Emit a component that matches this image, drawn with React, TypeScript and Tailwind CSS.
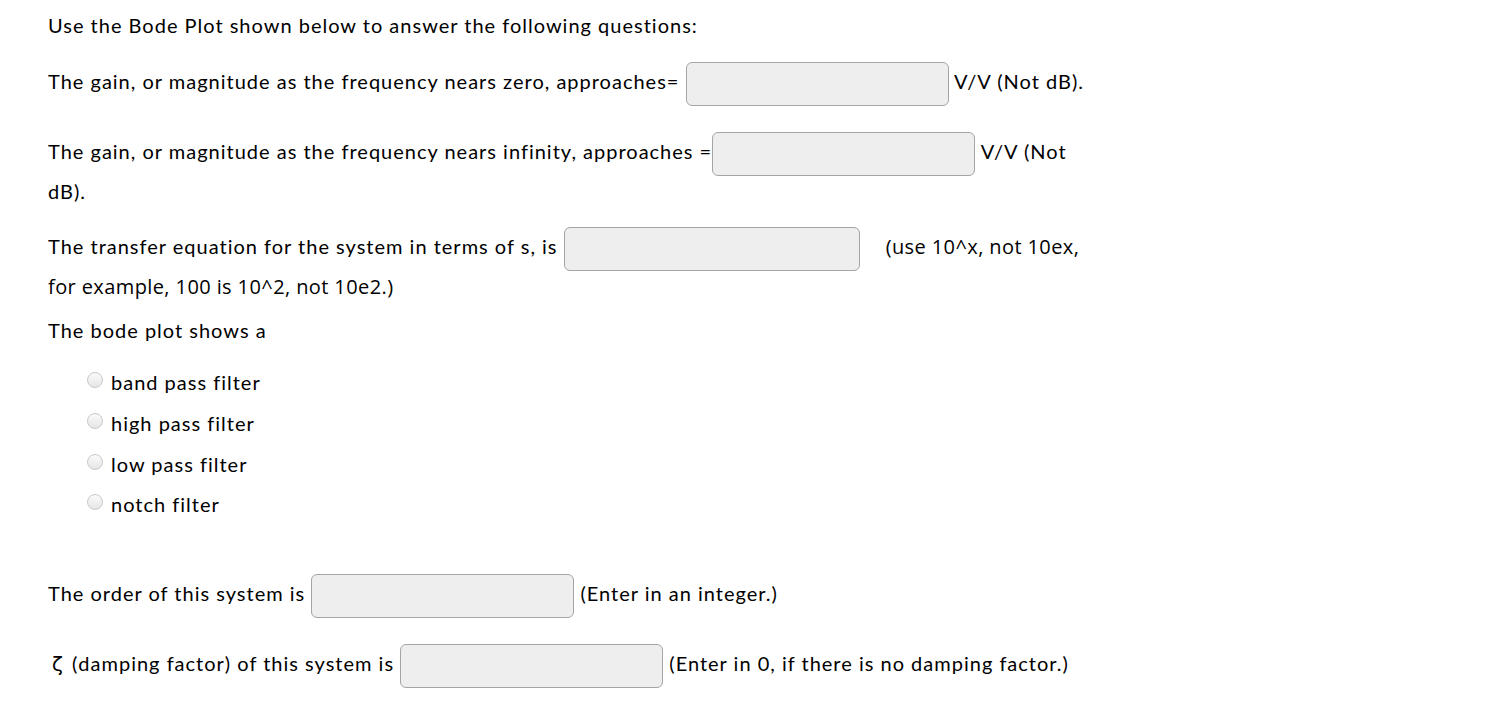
import { useState } from "react";

const options = [
  "band pass filter",
  "high pass filter",
  "low pass filter",
  "notch filter",
];

function Blank({ wide }: { wide?: boolean }) {
  return (
    <input
      type="text"
      aria-label="answer"
      className={`inline-block h-[44px] ${
        wide ? "w-[296px]" : "w-[263px]"
      } rounded-[6px] border border-[#a5a5a5] bg-[#eeeeee] align-middle outline-none`}
    />
  );
}

export default function App() {
  const [choice, setChoice] = useState<string | null>(null);

  return (
    <div className="min-h-screen bg-white font-['Lato',sans-serif] text-[20px] leading-[30px] tracking-[1px] text-black">
      <div className="w-[1100px] pl-[48px] pt-[10px]">
        <p>Use the Bode Plot shown below to answer the following questions:</p>

        <p className="mt-[22px]">
          The gain, or magnitude as the frequency nears zero, approaches={" "}
          <Blank /> V/V (Not dB).
        </p>

        <p className="mt-[26px]">
          The gain, or magnitude as the frequency nears infinity, approaches =
          <Blank /> V/V (Not dB).
        </p>

        <p className="mt-[21px]">
          The transfer equation for the system in terms of s, is <Blank wide />
          <span className="pl-[26px] font-['Open_Sans',sans-serif] text-[20px] tracking-[0.4px]">
            (use 10^x, not 10ex, for example, 100 is 10^2, not 10e2.)
          </span>
        </p>

        <p className="mt-[13px]">The bode plot shows a</p>

        {/* answer choices */}
        <div className="mt-[17px] flex flex-col pl-[39px]">
          {options.map((opt) => (
            <label
              key={opt}
              className="flex h-[40.7px] cursor-pointer items-center gap-[8px]"
            >
              <input
                type="radio"
                name="filter"
                checked={choice === opt}
                onChange={() => setChoice(opt)}
                className="h-[16px] w-[16px] shrink-0 -translate-y-[2px] appearance-none rounded-full border border-[#c8c8c8] bg-gradient-to-b from-[#fafafa] to-[#e6e6e6] checked:border-[#0374b5] checked:bg-[#0374b5]"
              />
              <span>{opt}</span>
            </label>
          ))}
        </div>

        <p className="mt-[49px]">
          The order of this system is <Blank /> (Enter in an integer.)
        </p>

        <p className="mt-[26px]">
          <span className="ml-[4px] mr-[2px] font-['DejaVu_Sans',sans-serif]">ζ</span>{" "}
          (damping factor) of this system is <Blank /> (Enter in 0, if there is
          no damping factor.)
        </p>
      </div>
    </div>
  );
}
